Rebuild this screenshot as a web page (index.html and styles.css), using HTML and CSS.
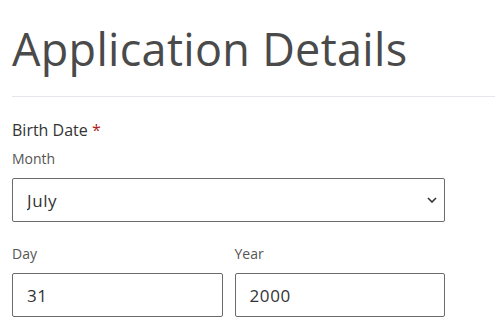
FILE: index.html
```html
<!DOCTYPE html>
<html lang="en">
  <head>
    <meta charset="UTF-8">
    <title>Application Details</title>
    <link rel="stylesheet" href="styles.css">
  </head>
  <body>
    <main class="page">
      <h1 class="page-title">Application Details</h1>
      <hr class="divider">

      <div class="field-group" role="group" aria-labelledby="birth-date">
        <div class="group-label" id="birth-date">Birth Date <span class="required">*</span></div>

        <div class="field">
          <label class="field-label" for="month">Month</label>
          <div class="select-wrap">
            <select id="month" class="control">
              <option>January</option>
              <option>February</option>
              <option>March</option>
              <option>April</option>
              <option>May</option>
              <option>June</option>
              <option selected>July</option>
              <option>August</option>
              <option>September</option>
              <option>October</option>
              <option>November</option>
              <option>December</option>
            </select>
            <svg class="chevron" width="10" height="6" viewBox="0 0 10 6" aria-hidden="true">
              <path d="M1 1l4 4 4-4" fill="none" stroke="#333" stroke-width="1.6"/>
            </svg>
          </div>
        </div>

        <div class="field-row">
          <div class="field">
            <label class="field-label" for="day">Day</label>
            <input id="day" class="control" type="text" value="31">
          </div>
          <div class="field">
            <label class="field-label" for="year">Year</label>
            <input id="year" class="control" type="text" value="2000">
          </div>
        </div>
      </div>
    </main>
  </body>
</html>
```

FILE: styles.css
```css
html {
  box-sizing: border-box;
}

*,
*::before,
*::after {
  box-sizing: inherit;
}

body {
  margin: 0;
  background: #ffffff;
  font-family: "Open Sans", Arial, sans-serif;
  color: #333333;
}

.page {
  padding: 0 0 0 12px;
}

.page-title {
  margin: 0;
  padding-top: 22px;
  font-size: 45px;
  line-height: 54px;
  font-weight: 400;
  color: #4a4a4a;
  letter-spacing: 0.3px;
}

.divider {
  margin: 20px 0 0 0;
  border: 0;
  border-top: 1px solid #e6e6ec;
}

.field-group {
  width: 433px;
}

.group-label {
  margin-top: 23px;
  font-size: 16px;
  line-height: 20px;
  color: #333333;
}

.required {
  color: #b31b1b;
}

.field {
  display: flex;
  flex-direction: column;
  margin-top: 10px;
}

.field-label {
  font-size: 14px;
  line-height: 18px;
  color: #555555;
  margin-bottom: 10px;
}

.field-row {
  display: grid;
  grid-template-columns: 1fr 1fr;
  gap: 12px;
  margin-top: 13px;
}

.control {
  width: 100%;
  height: 44px;
  border: 1px solid #6b6b6b;
  border-radius: 2px;
  padding: 0 14px;
  font-family: inherit;
  font-size: 17px;
  letter-spacing: 0.6px;
  color: #333333;
  background: #ffffff;
  appearance: none;
  outline: none;
}

.select-wrap {
  position: relative;
}

.chevron {
  position: absolute;
  right: 8px;
  top: 19px;
  pointer-events: none;
}
```
